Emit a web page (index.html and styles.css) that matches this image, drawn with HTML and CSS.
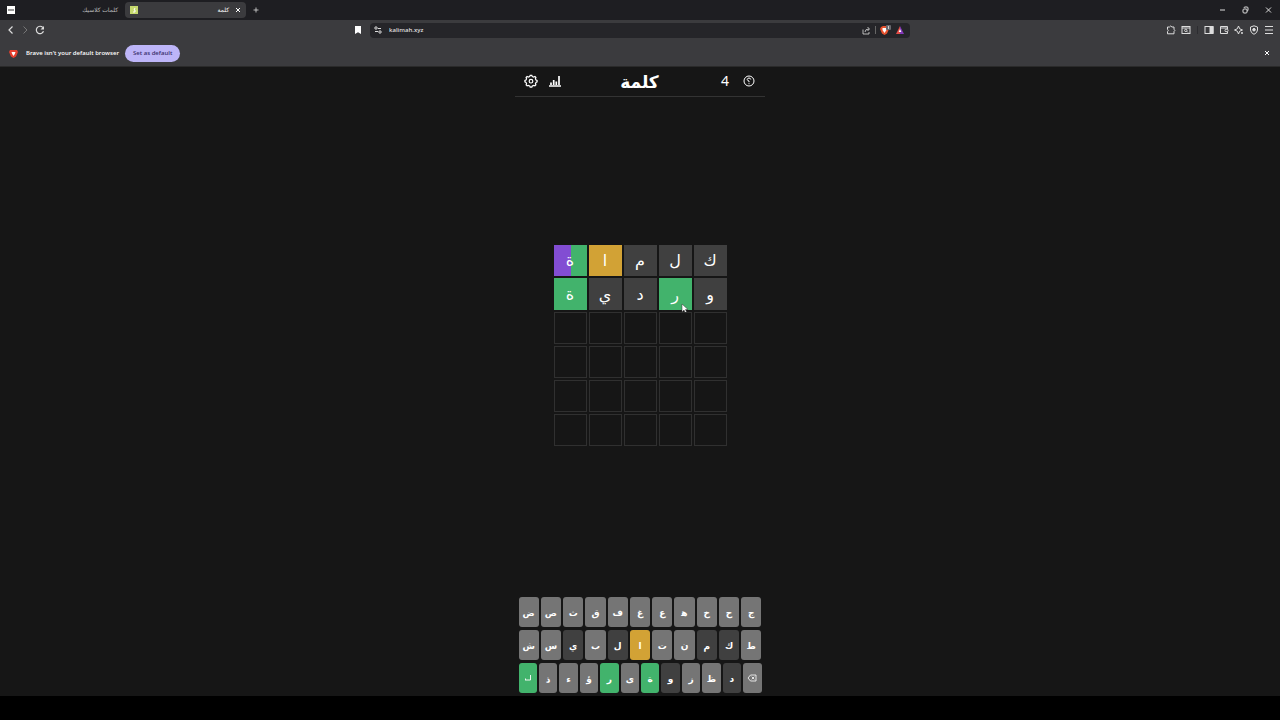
FILE: index.html
```html
<!DOCTYPE html>
<html lang="ar">
<head>
    <meta charset="UTF-8">
    <meta name="viewport" content="width=device-width, initial-scale=1.0">
    <title>كلمة</title>
    <link rel="stylesheet" href="styles.css">
</head>
<body>
    <div class="browser">
        <div class="tabs">
            <div class="tab">
                <svg class="favicon" viewBox="0 0 8 8"><rect width="8" height="8" fill="#fff"/><path d="M1 4h6" stroke="#777" stroke-width="1.500"/></svg>
                <span class="tab-title" dir="rtl">كلمات كلاسيك</span>
            </div>
            <div class="tab current">
                <svg class="favicon" viewBox="0 0 8 8"><rect width="8" height="8" fill="#c5d86d"/><path d="M3 6h2V4H4l1-2" fill="none" stroke="#fff"/></svg>
                <span class="tab-title" dir="rtl">كلمة</span>
                <button class="icon-btn close-tab" aria-label="Close tab"><svg width="6" height="6" viewBox="0 0 6 6"><path d="M1 1l4 4M5 1L1 5"/></svg></button>
            </div>
            <button class="icon-btn new-tab" aria-label="New tab"><svg width="8" height="8" viewBox="0 0 8 8"><path d="M4 1.500v5M1.500 4h5" stroke-width=".8"/></svg></button>
            <div class="window-buttons">
                <button class="icon-btn" aria-label="Minimize"><svg width="7" height="8" viewBox="0 0 7 8"><path d="M1 4h5"/></svg></button>
                <button class="icon-btn" aria-label="Restore"><svg width="7" height="8" viewBox="0 0 7 8"><rect x="1" y="3" width="4" height="4" rx="1"/><path d="M2 2q0-1 1-1h2q1 0 1 1v2q0 1-1 1"/></svg></button>
                <button class="icon-btn" aria-label="Close"><svg width="7" height="8" viewBox="0 0 7 8"><path d="M1 1.500l5 5M6 1.500l-5 5"/></svg></button>
            </div>
        </div>

        <div class="toolbar">
            <div class="nav">
                <button class="icon-btn" aria-label="Back"><svg width="8" height="10" viewBox="0 0 8 10"><path d="M5.500 1.500L2 5l3.500 3.500" stroke-width="1.200"/></svg></button>
                <button class="icon-btn dim" aria-label="Forward"><svg width="8" height="10" viewBox="0 0 8 10"><path d="M2.500 1.500L6 5l-3.500 3.500"/></svg></button>
                <button class="icon-btn" aria-label="Reload"><svg width="10" height="10" viewBox="0 0 10 10"><path d="M8.500 6.300A3.700 3.700 0 1 1 7.800 2.500" stroke-width="1.200"/><path d="M9 1v3.500H5.500z" fill="currentColor" stroke="none"/></svg></button>
            </div>
            <div class="address-area">
                <button class="icon-btn" aria-label="Bookmark"><svg width="8" height="10" viewBox="0 0 8 10"><path d="M1 1h6v8L4 7.200 1 9z" fill="#fff" stroke="none"/></svg></button>
                <div class="address">
                    <svg width="8" height="8" viewBox="0 0 8 8"><circle cx="2" cy="2" r="1.200"/><path d="M4 2.500h3M1 5.500h3"/><circle cx="6" cy="6" r="1.200"/></svg>
                    <input type="text" value="kalimah.xyz" aria-label="Address">
                    <svg width="9" height="9" viewBox="0 0 9 9"><path d="M1 3.500v4.500h6V6M3 6q0-3 4-3M5.500 1l2 2-2 2" stroke-width=".8"/></svg>
                    <span class="divider"></span>
                    <svg class="shield" width="12" height="11" viewBox="0 0 12 11"><path d="M1 2l2-1h3l2 1 1 2-2 4.500L4.500 10 2 8.500 0 4z" fill="#e8522e" stroke="none"/><path d="M2.500 3h4v2L4.500 8l-2-3z" fill="#fff" stroke="none"/><rect x="6" y="0" width="5" height="5" rx="1" fill="#68686e" stroke="none"/><path d="M8.500 1v3" stroke="#ccc"/></svg>
                    <svg width="8" height="8" viewBox="0 0 8 8"><path d="M4 0v8H0z" fill="#e34a45" stroke="none"/><path d="M4 0l4 8H4z" fill="#8438b9" stroke="none"/><path d="M4 3L2.600 6h2.800z" fill="#fff" stroke="none"/></svg>
                </div>
            </div>
            <div class="extensions">
                <button class="icon-btn" aria-label="Extensions"><svg width="10" height="10" viewBox="0 0 10 10"><path d="M1.500 2h2q1-2 2.500 0h2v2.300q1.800 1 0 2.200V8.800H1.500V6.700q1.500-1.200 0-2.400z"/></svg></button>
                <button class="icon-btn" aria-label="Search tabs"><svg width="10" height="10" viewBox="0 0 10 10"><rect x="1" y="1.500" width="8" height="7"/><path d="M1 3h8M5.800 6.300L7 7.500"/><circle cx="4.800" cy="5.400" r="1.200"/></svg></button>
                <span class="divider"></span>
                <button class="icon-btn" aria-label="Sidebar"><svg width="10" height="10" viewBox="0 0 10 10"><rect x="1" y="1.500" width="8" height="7"/><path d="M6 1.500h3v7H6z" fill="currentColor"/></svg></button>
                <button class="icon-btn" aria-label="Wallet"><svg width="10" height="10" viewBox="0 0 10 10"><path d="M8.500 4V1.500H1.500V8.500h7V7M1.500 3h7"/><rect x="6" y="4.200" width="3" height="2.500" rx="1"/></svg></button>
                <button class="icon-btn" aria-label="Assistant"><svg width="10" height="10" viewBox="0 0 10 10"><path d="M4.500 1l1.200 2.800L8.500 5 5.700 6.200 4.500 9 3.300 6.200.500 5l2.800-1.200z"/><circle cx="8" cy="8" r="1" fill="currentColor" stroke="none"/></svg></button>
                <button class="icon-btn" aria-label="Protection"><svg width="10" height="10" viewBox="0 0 10 10"><path d="M5 .800L8.500 2v3Q8.300 8 5 9.300 1.700 8 1.500 5V2z"/><circle cx="5" cy="4.700" r="1.300" fill="currentColor"/></svg></button>
                <button class="icon-btn" aria-label="Menu"><svg width="10" height="10" viewBox="0 0 10 10"><path d="M1 1.500h8M1 5h8M1 8.500h8"/></svg></button>
            </div>
        </div>

        <div class="notice">
            <svg width="9" height="9" viewBox="0 0 9 9"><path d="M1 1h7l1 2-2 4.500L4.500 9 2 7.500 0 3z" fill="#e5402f" stroke="none"/><path d="M2.500 3h4L5.800 5 4.500 7 3.200 5z" fill="#fff" stroke="none"/></svg>
            <span>Brave isn't your default browser</span>
            <button class="default-btn">Set as default</button>
            <button class="icon-btn close-notice" aria-label="Dismiss"><svg width="6" height="6" viewBox="0 0 6 6"><path d="M1 1l4 4M5 1L1 5"/></svg></button>
        </div>
    </div>

    <main class="game">
        <header class="game-header">
            <div class="side">
                <button class="icon-btn" aria-label="الإعدادات"><svg width="14" height="14" viewBox="0 0 14 14"><path d="M5.700 2.500L6.200 1.300h1.600L8.300 2.500l1.400.500 1.200-.500 1 1-.500 1.200.600 1.300 1.100.500v1.400l-1.100.500-.600 1.300.500 1.200-1 1-1.200-.500-1.400.500-.500 1.200H6.200L5.700 11.900l-1.400-.500-1.200.500-1-1 .500-1.200-.600-1.300L.9 7.900V6.500L2 6l.600-1.300-.500-1.200 1-1 1.200.500z" stroke-width="1.200"/><circle cx="7" cy="7.200" r="1.800" stroke-width="1.200"/></svg></button>
                <button class="icon-btn" aria-label="الإحصائيات"><svg width="14" height="14" viewBox="0 0 14 14"><path d="M1 12h12M3 8.500V11M5.700 6v5M8.300 7.500V11M11 2v9" stroke-width="1.700"/></svg></button>
            </div>
            <h1>كلمة</h1>
            <div class="side right">
                <span class="count">4</span>
                <button class="icon-btn" aria-label="مساعدة"><svg width="12" height="12" viewBox="0 0 12 12"><circle cx="6" cy="6" r="5"/><path d="M7.800 4.500Q7.500 3 6 3T4.200 4.600Q4.300 5.600 6 6v1.200M6 8.200v1"/></svg></button>
            </div>
        </header>

        <div class="board-area">
            <div class="board">
                <div class="tile split">ة</div>
                <div class="tile present">ا</div>
                <div class="tile absent">م</div>
                <div class="tile absent">ل</div>
                <div class="tile absent">ك</div>
                <div class="tile correct">ة</div>
                <div class="tile absent">ي</div>
                <div class="tile absent">د</div>
                <div class="tile correct">ر<svg class="cursor" width="8" height="11" viewBox="0 0 8 11"><path d="M1 1v8l2-2 1.200 3 1.500-.700L4.500 6.500H7z" fill="#fff" stroke="#333" stroke-width=".5"/></svg></div>
                <div class="tile absent">و</div>
                <div class="tile"></div><div class="tile"></div><div class="tile"></div><div class="tile"></div><div class="tile"></div>
                <div class="tile"></div><div class="tile"></div><div class="tile"></div><div class="tile"></div><div class="tile"></div>
                <div class="tile"></div><div class="tile"></div><div class="tile"></div><div class="tile"></div><div class="tile"></div>
                <div class="tile"></div><div class="tile"></div><div class="tile"></div><div class="tile"></div><div class="tile"></div>
            </div>
        </div>

        <div class="keyboard">
            <div class="key-row">
                <button>ض</button>
                <button>ص</button>
                <button>ث</button>
                <button>ق</button>
                <button>ف</button>
                <button>غ</button>
                <button>ع</button>
                <button>ه&zwj;</button>
                <button>خ</button>
                <button>ح</button>
                <button>ج</button>
            </div>
            <div class="key-row">
                <button>ش</button>
                <button>س</button>
                <button class="absent">ي</button>
                <button>ب</button>
                <button class="absent">ل</button>
                <button class="present">ا</button>
                <button>ت</button>
                <button>ن</button>
                <button class="absent">م</button>
                <button class="absent">ك</button>
                <button>ط</button>
            </div>
            <div class="key-row">
                <button class="correct" aria-label="إدخال"><svg width="10" height="8" viewBox="0 0 10 8"><path d="M7.500 1v5H2M2.500 4.500V6" stroke-width=".9"/></svg></button>
                <button>ذ</button>
                <button>ء</button>
                <button>ؤ</button>
                <button class="correct">ر</button>
                <button>ى</button>
                <button class="correct">ة</button>
                <button class="absent">و</button>
                <button>ز</button>
                <button>ظ</button>
                <button class="absent">د</button>
                <button aria-label="حذف"><svg width="10" height="8" viewBox="0 0 10 8"><path d="M3.500 1H9v6H3.500L1 4zM4.700 2.700l2.600 2.600M7.300 2.700L4.700 5.300" stroke-width=".8"/></svg></button>
            </div>
        </div>
    </main>
    <div class="taskbar"></div>
</body>
</html>
```
FILE: styles.css
```css
* {
    box-sizing: border-box;
}
body {
    margin: 0;
    min-height: 100vh;
    display: flex;
    flex-direction: column;
    background-color: #161616;
    color: #fff;
    font-family: "Noto Sans", "DejaVu Sans", sans-serif;
}
svg {
    display: block;
    flex: none;
    fill: none;
    stroke: currentColor;
}
button {
    padding: 0;
    border: none;
    color: inherit;
    font-family: inherit;
    cursor: pointer;
}
.icon-btn {
    display: flex;
    align-items: center;
    justify-content: center;
    background: none;
}

/* browser */
.browser {
    background-color: #3b3b3e;
    border-bottom: 1px solid #2a2a2a;
    color: #ddd;
    font-family: "Open Sans", "DejaVu Sans", sans-serif;
    font-size: 6px;
}
.tabs {
    display: flex;
    align-items: center;
    height: 20px;
    padding: 0 8px 0 4px;
    background-color: #1e1e22;
}
.tab {
    display: flex;
    align-items: center;
    width: 121px;
    height: 16px;
    padding: 0 3px;
    color: #bbb;
}
.tab.current {
    padding: 0 5px;
    background-color: #3b3b3e;
    border-radius: 4px;
    color: #fff;
}
.favicon {
    width: 8px;
    height: 8px;
    stroke: none;
}
.tab-title {
    flex: 1;
    margin-right: 4px;
}
.close-tab {
    margin-left: 2px;
}
.new-tab {
    margin-left: 6px;
}
.window-buttons {
    display: flex;
    gap: 16px;
    margin-left: auto;
}
.toolbar {
    display: grid;
    grid-template-columns: 1fr 572px 1fr;
    align-items: center;
    height: 20px;
    padding: 0 6px;
}
.nav {
    display: flex;
    gap: 6px;
    padding-left: 1px;
}
.dim {
    color: #777;
}
.address-area {
    display: flex;
    align-items: center;
    gap: 8px;
    margin-right: 16px;
}
.address {
    flex: 1;
    display: flex;
    align-items: center;
    gap: 4px;
    height: 15px;
    padding: 0 6px 0 4px;
    background-color: #252529;
    border-radius: 4px;
}
.address input {
    flex: 1;
    padding: 0 3px;
    border: none;
    background: none;
    color: #ddd;
    font-family: inherit;
    font-size: 6px;
    font-weight: 600;
}
.divider {
    width: 1px;
    height: 8px;
    background-color: #666;
}
.extensions {
    display: flex;
    justify-content: flex-end;
    align-items: center;
    gap: 5px;
}
.extensions .divider {
    margin: 0 1px;
    background-color: #2c2c30;
}
.notice {
    display: flex;
    align-items: center;
    height: 26px;
    padding: 0 10px 0 9px;
    color: #fff;
    font-weight: 600;
}
.notice span {
    margin: 0 6px 0 8px;
}
.default-btn {
    height: 17px;
    padding: 0 8px;
    background-color: #bdb5f8;
    border-radius: 9px;
    color: #39306c;
    font-size: 6px;
    font-weight: 600;
}
.close-notice {
    margin-left: auto;
}

/* game */
.game {
    flex: 1;
    display: flex;
    flex-direction: column;
    align-items: center;
}
.game-header {
    display: flex;
    align-items: center;
    justify-content: space-between;
    width: 250px;
    height: 30px;
    padding: 0 10px 2px 9px;
    border-bottom: 1px solid #333;
}
.game-header h1 {
    margin: 0;
    padding-top: 2px;
    font-size: 17px;
    line-height: 26px;
}
.side {
    display: flex;
    align-items: center;
    gap: 10px;
    width: 80px;
}
.side.right {
    justify-content: flex-end;
    gap: 14px;
}
.count {
    font-size: 14px;
    line-height: 20px;
}
.board-area {
    flex: 1;
    display: flex;
    align-items: center;
    padding-bottom: 4px;
}
.board {
    display: grid;
    grid-template-columns: repeat(5, 1fr);
    grid-template-rows: repeat(6, 1fr);
    gap: 2px;
    width: 173px;
    height: 201px;
}
.tile {
    position: relative;
    display: flex;
    align-items: center;
    justify-content: center;
    border: 1px solid #303030;
    font-size: 16px;
    line-height: 24px;
}
.tile.absent, .tile.present, .tile.correct, .tile.split {
    border: none;
}
.absent, .key-row .absent {
    background-color: #404040;
}
.present, .key-row .present {
    background-color: #d2a235;
}
.correct, .key-row .correct {
    background-color: #42b36c;
}
.split {
    background: linear-gradient(to right, #824dd3 50%, #42b36c 50%);
}
.cursor {
    position: absolute;
    right: 3px;
    bottom: -4px;
}
.keyboard {
    display: flex;
    flex-direction: column;
    gap: 3px;
    width: 243px;
    padding-bottom: 3px;
}
.key-row {
    display: flex;
    gap: 2px;
}
.key-row button {
    flex: 1;
    display: flex;
    align-items: center;
    justify-content: center;
    height: 30px;
    background-color: #757575;
    border-radius: 3px;
    font-size: 9px;
    font-weight: bold;
}
.taskbar {
    height: 24px;
    background-color: #000;
}
```
